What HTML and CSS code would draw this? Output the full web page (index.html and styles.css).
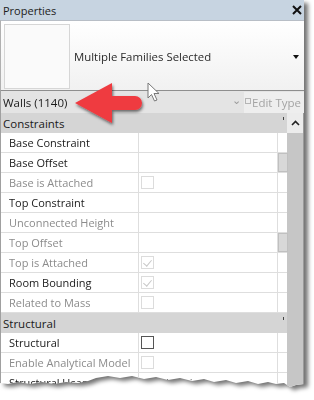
FILE: index.html
```html
<!DOCTYPE html>
<html>
<head>
<meta charset="utf-8">
<link rel="stylesheet" href="styles.css">
</head>
<body>
<div class="stage">
  <div class="shadow">
    <div class="panel">
      <div class="titlebar">
        <span class="title">Properties</span>
        <svg class="close" width="10" height="10" viewBox="0 0 10 10"><path d="M1 1L9 9M9 1L1 9" stroke="#111" stroke-width="2"/></svg>
      </div>
      <div class="selector">
        <div class="preview"></div>
        <div class="family">Multiple Families Selected</div>
        <div class="drop"></div>
      </div>
      <div class="walls">
        <span class="walls-label">Walls (1140)</span>
        <span class="chev">&#8964;</span>
        <span class="edit"><span class="edit-ico"></span>Edit Type</span>
      </div>
      <div class="body">
        <div class="table">
          <div class="group">Constraints<span class="dot"></span></div>
          <div class="row"><span class="name">Base Constraint</span><span class="val"></span><span class="side"></span></div>
          <div class="row"><span class="name">Base Offset</span><span class="val"></span><span class="side"><span class="thumb"></span></span></div>
          <div class="row dim"><span class="name">Base is Attached</span><span class="val"><span class="cb"></span></span><span class="side"></span></div>
          <div class="row"><span class="name">Top Constraint</span><span class="val"></span><span class="side"></span></div>
          <div class="row dim"><span class="name">Unconnected Height</span><span class="val"></span><span class="side"></span></div>
          <div class="row dim"><span class="name">Top Offset</span><span class="val"></span><span class="side"><span class="thumb"></span></span></div>
          <div class="row dim"><span class="name">Top is Attached</span><span class="val"><span class="cb checked"></span></span><span class="side"></span></div>
          <div class="row"><span class="name">Room Bounding</span><span class="val"><span class="cb checked"></span></span><span class="side"></span></div>
          <div class="row dim"><span class="name">Related to Mass</span><span class="val"><span class="cb"></span></span><span class="side"></span></div>
          <div class="group">Structural<span class="dot"></span></div>
          <div class="row"><span class="name">Structural</span><span class="val"><span class="cb dark"></span></span><span class="side"></span></div>
          <div class="row dim"><span class="name">Enable Analytical Model</span><span class="val"><span class="cb"></span></span><span class="side"></span></div>
          <div class="row"><span class="name">Structural Usage</span><span class="val">Non-bearing</span><span class="side"></span></div>
        </div>
        <div class="scroll">
          <div class="scroll-up"><svg width="9" height="6" viewBox="0 0 9 6"><path d="M1 5L4.5 1.5L8 5" fill="none" stroke="#222" stroke-width="1.6"/></svg></div>
          <div class="scroll-track"></div>
        </div>
      </div>
    </div>
  </div>
  <svg class="arrow" width="90" height="52" viewBox="60 78 90 52">
    <defs><filter id="sh" x="-20%" y="-20%" width="140%" height="150%"><feDropShadow dx="1" dy="2" stdDeviation="1.5" flood-color="#000" flood-opacity="0.55"/></filter></defs>
    <path d="M75 103L112 83L112 96L135 96A7 7 0 0 1 135 110L112 110L112 123Z" fill="#ef3a40" filter="url(#sh)"/>
  </svg>
  <svg class="cursor" width="14" height="20" viewBox="0 0 14 20">
    <path d="M1 1L1 16L4.5 12.5L7.5 19L10 18L7 11.5L12 11.5Z" fill="#fff" stroke="#777" stroke-width="1"/>
  </svg>
</div>
</body>
</html>
```
FILE: styles.css
```css
* { box-sizing: border-box; }
body {
  margin: 0;
  background: #fff;
  font-family: "Open Sans", "Noto Sans", sans-serif;
  font-size: 11px;
  color: #1a1a1a;
}
.stage {
  position: relative;
  width: 314px;
  height: 400px;
}
.shadow {
  width: 304px;
  filter: drop-shadow(4px 3px 2px rgba(0,0,0,0.55));
}
.panel {
  width: 304px;
  height: 392px;
  background: #fff;
  overflow: hidden;
  clip-path: polygon(0 0, 100% 0, 100% 384px, 296px 385px, 290px 387px, 284px 383px, 276px 384px, 268px 382px, 258px 384px, 248px 381px, 236px 383px, 226px 380px, 214px 382px, 204px 379px, 192px 381px, 180px 378px, 168px 380px, 156px 377px, 144px 379px, 132px 376px, 120px 378px, 108px 376px, 96px 378px, 88px 381px, 78px 383px, 66px 382px, 54px 384px, 42px 382px, 30px 384px, 18px 382px, 8px 384px, 0 383px);
}
.titlebar {
  height: 20px;
  background: #c7d4e1;
  display: flex;
  align-items: center;
  justify-content: space-between;
  padding: 0 2px 0 3px;
}
.title { font-size: 11px; color: #1c1c1c; }
.selector {
  height: 71px;
  border-top: 1px solid #b8bec6;
  border-left: 1px solid #b0b0b0;
  border-bottom: 1px solid #8e8e8e;
  background: linear-gradient(#ffffff, #f1f1f1);
  display: flex;
  align-items: center;
  padding: 0 4px 0 3px;
}
.preview {
  width: 66px;
  height: 65px;
  border: 1px solid #d6d6d6;
  background: #fafafa;
  align-self: flex-start;
  margin-top: 3px;
}
.family {
  flex: 1;
  margin-left: 4px;
  font-size: 11.4px;
  color: #2a2a2a;
  padding-top: 2px;
}
.drop {
  width: 0;
  height: 0;
  border-left: 3.5px solid transparent;
  border-right: 3.5px solid transparent;
  border-top: 4px solid #111;
  margin-right: 1px;
  margin-top: 2px;
}
.walls {
  height: 22px;
  background: #e4e4e4;
  display: flex;
  align-items: center;
  border-left: 1px solid #a0a0a0;
  padding-left: 2px;
}
.walls-label { flex: 1; font-size: 11.5px; color: #1a1a1a; }
.chev { color: #9a9a9a; font-size: 11px; margin-right: 3px; position: relative; top: -3px; }
.edit {
  height: 21px;
  width: 60px;
  background: #eeeeee;
  color: #a4a4a4;
  font-size: 11.5px;
  display: flex;
  align-items: center;
  white-space: nowrap;
  padding-left: 1px;
}
.edit-ico {
  width: 6px;
  height: 6px;
  border: 1px solid #b5b5b5;
  margin-right: 1px;
  margin-top: -3px;
}
.body {
  display: flex;
}
.table {
  width: 287px;
  border-left: 1px solid #a0a0a0;
}
.group {
  height: 20px;
  background: #d5d5d5;
  display: flex;
  align-items: center;
  padding-left: 2px;
  font-size: 11.5px;
  color: #1a1a1a;
  position: relative;
}
.dot {
  position: absolute;
  right: 3px;
  top: 4px;
  width: 1px;
  height: 3px;
  background: #444;
}
.row {
  height: 20px;
  display: grid;
  grid-template-columns: 137px 139px 10px;
  border-bottom: 1px solid #dedede;
}
.row .name {
  padding-left: 8px;
  font-size: 11px;
  display: flex;
  align-items: center;
  white-space: nowrap;
  overflow: hidden;
}
.row.dim .name { color: #8c8c8c; }
.val {
  border-left: 1px solid #dedede;
  display: flex;
  align-items: center;
  padding-left: 2px;
  font-size: 11px;
  color: #555;
}
.side {
  border-left: 1px solid #dedede;
  position: relative;
}
.thumb {
  position: absolute;
  left: 0;
  top: 0;
  width: 10px;
  height: 19px;
  background: #d8d8d8;
  border: 1px solid #c0c0c0;
}
.cb {
  width: 13px;
  height: 13px;
  border: 1px solid #dcdcdc;
  background: #fff;
  position: relative;
}
.cb.dark { border-color: #555; }
.cb.checked::after {
  content: "";
  position: absolute;
  left: 3px;
  top: 1px;
  width: 4px;
  height: 7px;
  border-right: 1px solid #c8c8c8;
  border-bottom: 1px solid #c8c8c8;
  transform: rotate(40deg);
}
.scroll {
  width: 17px;
  display: flex;
  flex-direction: column;
  border-right: 1px solid #9a9a9a;
}
.scroll-up {
  height: 20px;
  background: #ececec;
  display: flex;
  justify-content: center;
  align-items: center;
}
.scroll-track {
  flex: 1;
  background: #c6c6c6;
}
.arrow {
  position: absolute;
  left: 60px;
  top: 78px;
}
.cursor {
  position: absolute;
  left: 147px;
  top: 82px;
}
```
